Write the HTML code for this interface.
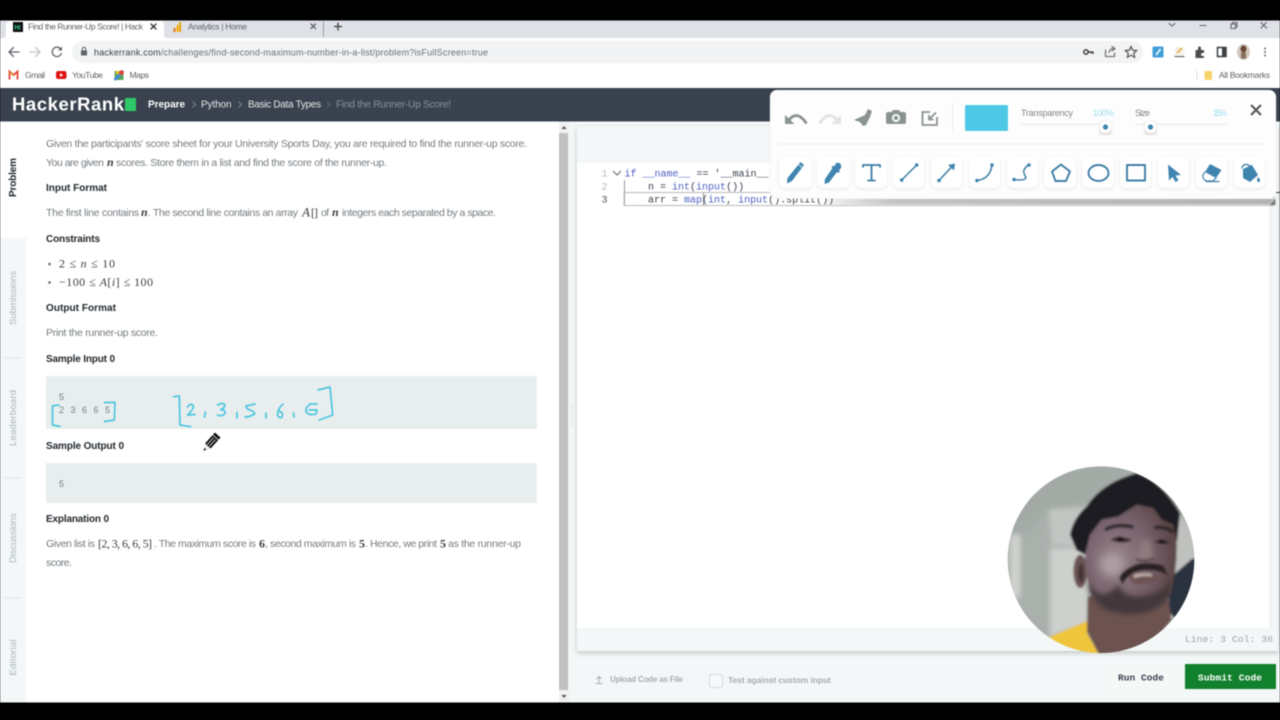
<!DOCTYPE html>
<html lang="en"><head><meta charset="utf-8"><title>Find the Runner-Up Score</title>
<style>
html,body{margin:0;padding:0;background:#000;width:1280px;height:720px;overflow:hidden}
svg{display:block;filter:blur(.4px)}
text{font-family:"Liberation Sans",sans-serif;white-space:pre}
.b{font-size:10.5px;fill:#767c81}
.h{font-size:10px;font-weight:700;fill:#23292e}
.m{font-family:"Liberation Serif",serif;font-size:12px;fill:#3a3f44}
.mi{font-family:"Liberation Serif",serif;font-size:12px;font-style:italic;font-weight:700;fill:#3a3f44}
.c{font-family:"Liberation Mono",monospace;font-size:10px;fill:#39424e}
.t{font-size:8.5px;fill:#5f6368}
.v{font-size:9.5px;fill:#aab4b4}
.p{font-size:9px}
.hand{fill:none;stroke:#4ec5e0;stroke-width:1.7;stroke-linecap:round;stroke-linejoin:round}
.ic{fill:none;stroke:#3f7ea6;stroke-width:1.5;stroke-linecap:round;stroke-linejoin:round}
.if{fill:#3f85b0}
.tb{fill:#fff;filter:drop-shadow(0 1px 1.5px rgba(90,80,110,.14))}
.g{fill:#8a938f}
.ch{fill:none;stroke:#5f6368;stroke-width:1.3;stroke-linecap:round;stroke-linejoin:round}
</style></head><body>
<svg width="1280" height="720" viewBox="0 0 1280 720" xmlns="http://www.w3.org/2000/svg">
<defs>
<clipPath id="cam"><circle cx="288" cy="290" r="280"/></clipPath>
<radialGradient id="skin" cx=".35" cy=".5" r=".7"><stop offset="0" stop-color="#97838a"/><stop offset=".55" stop-color="#75606a"/><stop offset="1" stop-color="#54403f"/></radialGradient>
<linearGradient id="band" x1="0" x2="1" y1="0" y2="0"><stop offset="0" stop-color="#bbb" stop-opacity=".15"/><stop offset=".15" stop-color="#c4c4c4"/><stop offset="1" stop-color="#b4b4b4"/></linearGradient>
<filter id="sf" x="-20%" y="-20%" width="140%" height="140%"><feGaussianBlur stdDeviation="7"/></filter>
<filter id="sg" x="-10%" y="-10%" width="120%" height="120%"><feGaussianBlur stdDeviation="3"/></filter>
<filter id="sl" x="-30%" y="-30%" width="160%" height="160%"><feGaussianBlur stdDeviation="14"/></filter>
<filter id="sh" x="-5%" y="-20%" width="110%" height="140%"><feDropShadow dx="0" dy="2" stdDeviation="2.500" flood-color="#333" flood-opacity=".25"/></filter>
</defs>

<rect width="1280" height="720" fill="#000"/>
<!-- tab strip -->
<rect y="20.500" width="1280" height="18" fill="#dee1e6"/>
<path d="M3 38.500Q6 38 6 34V25Q6 21 10 21H160Q164 21 164 25V34Q164 38 167 38.500Z" fill="#fff"/>
<rect x="13" y="22" width="10" height="10" fill="#0d0f12"/><text x="14.500" y="29.500" style="font-size:6px;font-weight:700" fill="#39d98a">HI</text>
<text class="t" x="28" y="29.500" textLength="115" lengthAdjust="spacing">Find the Runner-Up Score! | Hack</text>
<path class="ch" d="M151 24l5 5M156 24l-5 5" style="stroke:#333"/>
<rect x="173.500" y="28" width="2" height="4" fill="#e8710a"/><rect x="176.500" y="25" width="2" height="7" fill="#f9ab00"/><rect x="179" y="22" width="2" height="10" fill="#e8a30a"/>
<text class="t" x="188" y="29.500" textLength="59" lengthAdjust="spacing">Analytics | Home</text>
<path class="ch" d="M311 24l4.500 4.500M315.500 24l-4.500 4.500"/>
<path d="M323.500 21v16" stroke="#9aa0a6"/>
<path d="M338 22.500v8M334 26.500h8" stroke="#3c4043" stroke-width="1.300"/>
<path class="ch" d="M1169 23.500l3 2.500 3-2.500M1200 25.500h6M1231 24h4.500v4.500h-4.500zM1232.500 24v-1.500h4.500v4.500h-1.500M1261 22.500l5.500 5.500M1266.500 22.500l-5.500 5.500" style="stroke-width:1.100"/>
<!-- toolbar -->
<rect y="38" width="1280" height="50" fill="#fff"/>
<rect x="72" y="41" width="1071" height="22" rx="11" fill="#f1f3f4"/>
<path class="ch" d="M19 52H9.500M13.500 47.500L9 52l4.500 4.500"/>
<path class="ch" d="M30 52h9.500M35.500 47.500L40 52l-4.500 4.500" style="stroke:#c0c4c8"/>
<path d="M61 49.500A4.700 4.700 0 1 0 61.500 53" fill="none" stroke="#5f6368" stroke-width="1.300"/><path d="M62 46.500v4h-4z" fill="#5f6368"/>
<rect x="81" y="50.500" width="6" height="5" fill="#5f6368"/><path d="M82.300 50.500v-1.500a1.700 1.700 0 0 1 3.400 0v1.500" fill="none" stroke="#5f6368"/>
<text x="94" y="55.300" style="font-size:9px" fill="#3c4043" textLength="394" lengthAdjust="spacing"><tspan>hackerrank.com</tspan><tspan fill="#6a6e72">/challenges/find-second-maximum-number-in-a-list/problem?isFullScreen=true</tspan></text>
<!-- right toolbar -->
<circle cx="1086" cy="52" r="2.200" fill="none" stroke="#333" stroke-width="1.400"/><path d="M1088 52h5v2M1091 52v1.500" fill="none" stroke="#333" stroke-width="1.200"/>
<path class="ch" d="M1105.500 50v6.500h9V53M1109 52.500c.5-3 2.500-4 5-4M1112 46.500l3 2.200-3 2.200" style="stroke:#777"/>
<path d="M1131 46.500l1.700 3.700 4 .4-3 2.700.9 4-3.600-2.100-3.600 2.100.9-4-3-2.700 4-.4z" fill="none" stroke="#444" stroke-width="1.100"/>
<rect x="1152.500" y="46.500" width="11" height="11" rx="1.500" fill="#3f9fd6"/><path d="M1156 55l4.500-6" stroke="#fff" stroke-width="1.600"/>
<path d="M1174.500 56.500h10" stroke="#666" stroke-width="1.200"/><rect x="1175" y="47" width="9" height="7.500" fill="#f4f1e6"/><path d="M1177 53l5-5" stroke="#e8a33a" stroke-width="1.500"/>
<path d="M1195.500 50h2.500v-2a1.500 1.500 0 0 1 3 0v2h3v3h-1.500a1.500 1.500 0 0 0 0 3h1.500v2h-8.500z" fill="#4a4d50"/>
<rect x="1217.500" y="47.500" width="8.500" height="9" fill="none" stroke="#3c4043" stroke-width="1.500"/><rect x="1222" y="47.500" width="4.500" height="9" fill="#3c4043"/>
<ellipse cx="1243.500" cy="52" rx="6.500" ry="8" fill="#d2c9bf"/><ellipse cx="1243.500" cy="49" rx="3" ry="3.500" fill="#6b4a38"/><rect x="1241" y="52.500" width="5" height="6" fill="#8a6f5d"/>
<circle cx="1265" cy="48.500" r="1" fill="#5f6368"/><circle cx="1265" cy="52" r="1" fill="#5f6368"/><circle cx="1265" cy="55.500" r="1" fill="#5f6368"/>
<!-- bookmarks -->
<path d="M9.500 79.500v-8l4 3.500 4-3.500v8" fill="none" stroke="#ea4335" stroke-width="1.800"/><path d="M9.500 72l4 3.500" stroke="#d6a020" stroke-width="1.200"/>
<text class="t" x="25" y="78" textLength="20" lengthAdjust="spacing">Gmail</text>
<rect x="56" y="71" width="10.500" height="8" rx="2.200" fill="#e01212"/><path d="M60 73v4l3.200-2z" fill="#fff"/>
<text class="t" x="72" y="78" textLength="31" lengthAdjust="spacing">YouTube</text>
<path d="M114.500 71h9v9h-9z" fill="#58a55c"/><path d="M114.500 80l9-9" stroke="#4a86e8" stroke-width="2.500"/><circle cx="121.500" cy="72.500" r="2.300" fill="#e94235"/><path d="M116 71h3v3h-3z" fill="#f5c518"/>
<text class="t" x="129.500" y="78" textLength="19.500" lengthAdjust="spacing">Maps</text>
<path d="M1197 70.500v10" stroke="#dadce0"/>
<rect x="1204.500" y="71" width="7.500" height="9" rx="1" fill="#f8d56b"/>
<text class="t" x="1219" y="78" textLength="51" lengthAdjust="spacing">All Bookmarks</text>

<!-- HR header -->
<rect y="88" width="1280" height="33.500" fill="#39424e"/>
<text x="12" y="110.500" style="font-size:18.500px;font-weight:700" fill="#fff" textLength="112" lengthAdjust="spacing">HackerRank</text>
<rect x="125" y="98" width="11" height="13" fill="#2ec866"/>
<text x="148" y="107.500" style="font-size:10px;font-weight:700" fill="#fff" textLength="37" lengthAdjust="spacing">Prepare</text>
<path d="M192.500 101.500l3 3-3 3M238.500 101.500l3 3-3 3" fill="none" stroke="#7b848e"/>
<text x="201" y="107.500" style="font-size:10px" fill="#e5e8ea" textLength="30.500" lengthAdjust="spacing">Python</text>
<text x="248" y="107.500" style="font-size:10px" fill="#e5e8ea" textLength="73" lengthAdjust="spacing">Basic Data Types</text>
<path d="M327 101.500l3 3-3 3" fill="none" stroke="#5f6873"/>
<text x="336" y="107.500" style="font-size:10px" fill="#8b939b" textLength="115" lengthAdjust="spacing">Find the Runner-Up Score!</text>

<!-- left pane -->
<rect y="121.500" width="560" height="581" fill="#fff"/>
<rect y="238" width="26" height="464.500" fill="#f3f7f7"/>
<path d="M4 358h17M4 478h17M4 598h17" stroke="#dfe5e5"/>
<g text-anchor="middle">
<text transform="translate(16,177.500) rotate(-90)" style="font-size:10px;font-weight:700" fill="#23292e" textLength="39" lengthAdjust="spacing">Problem</text>
<text class="v" transform="translate(16,298) rotate(-90)" textLength="54" lengthAdjust="spacing">Submissions</text>
<text class="v" transform="translate(16,418) rotate(-90)" textLength="56" lengthAdjust="spacing">Leaderboard</text>
<text class="v" transform="translate(16,538) rotate(-90)" textLength="50" lengthAdjust="spacing">Discussions</text>
<text class="v" transform="translate(16,657.500) rotate(-90)" textLength="36" lengthAdjust="spacing">Editorial</text>
</g>

<text class="b" x="46" y="147" textLength="481" lengthAdjust="spacing">Given the participants' score sheet for your University Sports Day, you are required to find the runner-up score.</text>
<text class="b" x="46" y="166" textLength="58" lengthAdjust="spacing">You are given</text><text class="mi" x="107" y="166">n</text>
<text class="b" x="116" y="166" textLength="271" lengthAdjust="spacing">scores. Store them in a list and find the score of the runner-up.</text>
<text class="h" x="46" y="191" textLength="61" lengthAdjust="spacing">Input Format</text>
<text class="b" x="46" y="216" textLength="93" lengthAdjust="spacing">The first line contains</text><text class="mi" x="141" y="216">n</text>
<text class="b" x="148" y="216" textLength="150" lengthAdjust="spacing">. The second line contains an array</text>
<text x="302" y="216.500" style="font-family:'Liberation Serif',serif;font-size:13px;font-style:italic" fill="#3a3f44">A</text><text x="311" y="216.500" style="font-family:'Liberation Serif',serif;font-size:12px" fill="#3a3f44" textLength="7" lengthAdjust="spacing">[ ]</text>
<text class="b" x="321" y="216" textLength="8" lengthAdjust="spacing">of</text><text class="mi" x="332" y="216">n</text>
<text class="b" x="342" y="216" textLength="154" lengthAdjust="spacing">integers each separated by a space.</text>
<text class="h" x="46" y="242" textLength="54" lengthAdjust="spacing">Constraints</text>
<circle cx="49.500" cy="264" r="1.300" fill="#666"/><circle cx="49.500" cy="282.500" r="1.300" fill="#666"/>
<text class="m" x="59" y="267.500" textLength="56" lengthAdjust="spacing">2 ≤ <tspan font-style="italic">n</tspan> ≤ 10</text>
<text class="m" x="59" y="286" textLength="94" lengthAdjust="spacing">−100 ≤ <tspan font-style="italic">A</tspan>[<tspan font-style="italic">i</tspan>] ≤ 100</text>
<text class="h" x="46" y="311" textLength="70" lengthAdjust="spacing">Output Format</text>
<text class="b" x="46" y="336" textLength="112" lengthAdjust="spacing">Print the runner-up score.</text>
<text class="h" x="46" y="362" textLength="69" lengthAdjust="spacing">Sample Input 0</text>
<rect x="46" y="376" width="491" height="53" fill="#e8eeee"/>
<text class="b" style="font-size:9px" x="59" y="400">5</text>
<text class="b" style="font-size:9px" x="59" y="413" textLength="51" lengthAdjust="spacing">2  3  6  6  5</text>
<text class="h" x="46" y="449" textLength="78" lengthAdjust="spacing">Sample Output 0</text>
<rect x="46" y="463" width="491" height="40" fill="#e8eeee"/>
<text class="b" style="font-size:9px" x="59" y="487">5</text>
<text class="h" x="46" y="522" textLength="63" lengthAdjust="spacing">Explanation 0</text>
<text class="b" x="46" y="547" textLength="49" lengthAdjust="spacing">Given list is</text>
<text class="m" x="98" y="547.500" textLength="54" lengthAdjust="spacing">[2, 3, 6, 6, 5]</text>
<text class="b" x="154" y="547" textLength="102" lengthAdjust="spacing">. The maximum score is</text>
<text class="m" style="font-weight:700" x="259" y="547.500">6</text>
<text class="b" x="265" y="547" textLength="91" lengthAdjust="spacing">, second maximum is</text>
<text class="m" style="font-weight:700" x="359" y="547.500">5</text>
<text class="b" x="365" y="547" textLength="72" lengthAdjust="spacing">. Hence, we print</text>
<text class="m" style="font-weight:700" x="440" y="547.500">5</text>
<text class="b" x="448" y="547" textLength="73" lengthAdjust="spacing">as the runner-up</text>
<text class="b" x="46" y="566" textLength="26" lengthAdjust="spacing">score.</text>

<!-- handwriting -->
<path class="hand" d="M59 405L52.500 406L52.500 425L60 426.500M104.500 402.500L115 402.300L114.300 420L104.500 421.500"/>
<path class="hand" d="M173.500 396.700L179.300 396L180 425L190.700 426.700"/>
<path class="hand" d="M187.500 407Q190 403.500 193 405Q195 408 187.500 415L195 414.500"/>
<path class="hand" d="M205.500 412L204.500 417"/>
<path class="hand" d="M217.500 405Q223 402 225 405Q224 409 220.500 409.500Q226 410 225 413.500Q222 417 217.500 415"/>
<path class="hand" d="M237 412.500L237 418"/>
<path class="hand" d="M255 404L246 406Q246 409 250 410Q255 412 254.500 414Q250 417 245 417"/>
<path class="hand" d="M266 413L266 418"/>
<path class="hand" d="M283 404Q278 408 277.500 415Q279 419 282 417Q284 412 278 411"/>
<path class="hand" d="M293.500 413L294 417"/>
<path class="hand" d="M317 404L310 404Q305 408 306 412Q310 416 316 414L317 410L309 410"/>
<path class="hand" d="M318 390L330 387L332.700 415L319.300 420"/>

<!-- scrollbar -->
<rect x="559" y="121.500" width="10" height="581" fill="#f1f1f1"/>
<rect x="559" y="133" width="9" height="557" fill="#c1c1c1"/>
<path d="M561.500 129l2.500-3 2.500 3zM561.500 695l2.500 3 2.500-3z" fill="#555"/>
<rect x="569" y="121.500" width="711" height="581" fill="#f3f7f7"/>
<path d="M572 404v22" stroke="#dde3e3" stroke-width="2" stroke-dasharray="1 1"/>

<!-- editor -->
<rect x="577" y="126" width="701" height="525" fill="#f3f7f7" filter="url(#sh)"/>
<rect x="577" y="163" width="693" height="465" fill="#fff"/>
<path d="M1270.500 163v465" stroke="#e3e7e7"/>
<text x="601.500" y="176.500" class="c" style="fill:#b5babd">1</text>
<text x="601.500" y="189.500" class="c" style="fill:#b5babd">2</text>
<text x="601.500" y="202.500" class="c" style="fill:#555">3</text>
<path d="M613 171l4 4 4-4" fill="none" stroke="#666"/>
<path d="M624.500 180v25" stroke="#999"/>
<rect x="624" y="192.500" width="650" height="13" fill="none" stroke="#bbb"/>
<text class="c" x="624.500" y="176.500"><tspan fill="#4a5fc0">if</tspan> <tspan fill="#4a5fc0">__name__</tspan> == '__main__':</text>
<text class="c" x="648" y="189.500">n = <tspan fill="#4a5fc0">int</tspan>(<tspan fill="#4a5fc0">input</tspan>())</text>
<path d="M703.500 193v12" stroke="#888"/>
<text x="1185" y="642" style="font-family:'Liberation Mono',monospace;font-size:9.500px" fill="#9aa3a3" textLength="88" lengthAdjust="spacing">Line: 3 Col: 36</text>

<!-- bottom bar -->
<path d="M599 676.500v7M596.500 679l2.500-2.500 2.500 2.500M595.500 683.500h7" fill="none" stroke="#a9b1b1"/>
<text x="610" y="682" style="font-size:8px;font-weight:700" fill="#a6aeae" textLength="73" lengthAdjust="spacing">Upload Code as File</text>
<rect x="709.500" y="674.500" width="13" height="13" rx="2" fill="#f6f9f9" stroke="#d5dbdb"/>
<text x="728" y="683" style="font-size:8.500px;font-weight:700" fill="#a6aeae" textLength="103" lengthAdjust="spacing">Test against custom input</text>
<rect x="1105" y="664" width="73" height="25" fill="#f6f8f8"/>
<text x="1118" y="680.500" style="font-family:'Liberation Mono',monospace;font-size:9.500px;font-weight:700" fill="#39424e" textLength="46" lengthAdjust="spacing">Run Code</text>
<rect x="1185" y="664" width="91" height="25" fill="#12812d"/>
<text x="1198" y="680.500" style="font-family:'Liberation Mono',monospace;font-size:9.500px;font-weight:700" fill="#fff" textLength="64" lengthAdjust="spacing">Submit Code</text>

<!-- webcam -->
<g clip-path="url(#cam)" transform="translate(1005,463) scale(.33333)">
<g filter="url(#sg)">
<rect x="-10" y="-10" width="600" height="600" fill="#aab0ac"/>
<path d="M0 0H400L240 140L130 150L60 210H0Z" fill="#a3aaa6" filter="url(#sl)"/>
<path d="M130 140L260 130L230 250L140 245Z" fill="#c2c6c2" filter="url(#sf)"/>
<path d="M135 255H250V480L135 520Z" fill="#cdd0cd" filter="url(#sf)"/>
<rect x="15" y="215" width="32" height="190" fill="#cfd1ce" filter="url(#sf)"/>
<path d="M500 150L580 200V310L510 340Z" fill="#bfc1be" filter="url(#sf)"/>
<path d="M495 345L560 288L590 280V400L510 470L490 440Z" fill="#29303f"/>
<path d="M480 440L505 462L490 478Z" fill="#d8d8d2"/>
<path d="M132 522L250 473L246 510L285 580H165Z" fill="#efc53a"/>
<path d="M248 400L246 505L285 580L420 570L500 470L490 410Z" fill="#6c5350"/>
<ellipse cx="226" cy="325" rx="21" ry="50" fill="#6b5352"/>
<ellipse cx="228" cy="330" rx="9" ry="28" fill="#453534"/>
<path d="M240 260Q245 150 320 130Q430 100 510 170Q525 290 495 400Q460 455 390 452Q290 450 260 400Q240 340 240 260Z" fill="url(#skin)"/>
<ellipse cx="320" cy="305" rx="36" ry="34" fill="#b0a0a6" filter="url(#sl)"/>
<path d="M244 350Q255 410 300 440Q370 465 430 445Q480 425 496 380L498 340L480 375Q440 400 395 400Q355 400 340 365Q320 390 290 395Q260 385 244 350Z" fill="#42373a" filter="url(#sf)"/>
<path d="M343 345Q350 320 400 302Q440 296 475 308L490 338L465 326Q420 315 385 330Q362 345 352 365Z" fill="#2a2223"/>
<path d="M368 340Q400 328 440 330L465 345Q430 368 385 362Z" fill="#6e5253"/>
<path d="M385 336Q410 328 442 333L440 341Q410 336 388 346Z" fill="#bdb0aa"/>
<path d="M195 215Q205 165 245 130Q290 60 395 30Q470 55 525 150L516 235L505 185L470 170L445 135L395 125L340 160L290 170L255 215L240 275L215 262Z" fill="#1b1a21"/>
<path d="M300 200Q340 180 385 193M448 195Q480 188 505 208" fill="none" stroke="#2f2529" stroke-width="11"/>
<path d="M315 230Q345 212 382 232Q350 246 315 230Z" fill="#3a2c2e"/>
<path d="M448 236Q472 222 497 238Q472 250 448 236Z" fill="#3a2c2e"/>
<ellipse cx="345" cy="228" rx="9" ry="8" fill="#151012"/><ellipse cx="470" cy="236" rx="8" ry="7" fill="#151012"/>
<path d="M412 230Q400 265 392 285Q420 295 445 285Q440 260 435 230Z" fill="#8f7a7e" filter="url(#sf)"/>
<path d="M392 288Q420 300 448 285" fill="none" stroke="#503e3e" stroke-width="6"/>
</g>
</g>

<!-- annotation panel -->
<rect x="825" y="199" width="451" height="5.500" fill="url(#band)"/>
<path d="M1270 205l5-5v5z" fill="#777"/>
<path d="M1276 192.500h4" stroke="#444"/>
<text class="c" x="648" y="202.500">arr = <tspan fill="#4a5fc0">map</tspan>(<tspan fill="#4a5fc0">int</tspan>, <tspan fill="#4a5fc0">input</tspan>().split())</text>
<rect x="770" y="90" width="506" height="108.500" rx="7" fill="#fefdfe"/>
<rect x="770" y="90" width="506" height="108.500" rx="7" fill="none" stroke="#ddd" stroke-opacity=".5" stroke-width=".5"/>
<path d="M952.500 102v31" stroke="#eceef0"/>
<path d="M779 144h487" stroke="#eeeff1" stroke-width="1.200"/>
<!-- undo etc -->
<path d="M788 121Q797 109 806.500 123.500" fill="none" stroke="#8a938f" stroke-width="2.800"/><path d="M785 115v9h9.500z" class="g"/>
<path d="M838 121Q829 109 819.500 123.500" fill="none" stroke="#e0e4e2" stroke-width="2.800"/><path d="M841 115v9h-9.500z" fill="#e0e4e2"/>
<path d="M854 120L865 115L868 109L872 111L870 117L866 125L863 126L860 122Z" class="g"/>
<path d="M888 112h3.500l1.500-2h6l1.500 2h3.500q2 0 2 2v8q0 2-2 2h-16q-2 0-2-2v-8q0-2 2-2z" class="g"/><circle cx="896" cy="118" r="4" fill="#fff"/><circle cx="896" cy="118" r="2.200" class="g"/>
<path d="M930 112H922.500V125H937V117M936 112.500L929 119.500M929 115V119.500H933.500" fill="none" stroke="#8a938f" stroke-width="1.800"/>
<rect x="965" y="105" width="43" height="26" rx="1.500" fill="#4fc8e6"/>
<text class="p" x="1021" y="116" fill="#7f8787" textLength="52" lengthAdjust="spacing">Transparency</text>
<text class="p" x="1093" y="116" fill="#9fdff0" textLength="21" lengthAdjust="spacing">100%</text>
<text class="p" x="1135" y="116" fill="#7f8787" textLength="15" lengthAdjust="spacing">Size</text>
<text class="p" x="1213" y="116" fill="#9fdff0" textLength="14" lengthAdjust="spacing">15%</text>
<path d="M1021 124.500h90M1135 124.500h92" stroke="#eceef0" stroke-width="1.500"/>
<circle cx="1105.500" cy="127" r="6" fill="#fff" filter="url(#sh)"/><circle cx="1105.500" cy="127" r="2.600" fill="#3f85b0"/>
<circle cx="1150.500" cy="127" r="6" fill="#fff" filter="url(#sh)"/><circle cx="1150.500" cy="127" r="2.600" fill="#3f85b0"/>
<path d="M1251 105l10 10M1261 105l-10 10" stroke="#4f5557" stroke-width="2"/>
<!-- tool buttons -->
<g>
<rect class="tb" x="779" y="157" width="33" height="31" rx="6"/><rect class="tb" x="817" y="157" width="33" height="31" rx="6"/><rect class="tb" x="855" y="157" width="32" height="31" rx="6"/><rect class="tb" x="893" y="157" width="31" height="31" rx="6"/><rect class="tb" x="931" y="157" width="31" height="31" rx="6"/><rect class="tb" x="969" y="157" width="31" height="31" rx="6"/><rect class="tb" x="1007" y="157" width="31" height="31" rx="6"/><rect class="tb" x="1044" y="157" width="32" height="31" rx="6"/><rect class="tb" x="1082" y="157" width="32" height="31" rx="6"/><rect class="tb" x="1120" y="157" width="31" height="31" rx="6"/><rect class="tb" x="1158" y="157" width="31" height="31" rx="6"/><rect class="tb" x="1196" y="157" width="31" height="31" rx="6"/><rect class="tb" x="1234" y="157" width="31" height="31" rx="6"/>
</g>
<path class="if" d="M800.500 162L804 165L792 181L787 183.500L787.500 178Z"/><path d="M798.500 164.500l3.500 2.800" stroke="#fff" stroke-width=".8"/>
<path class="if" d="M836 163q4-1 5 2t-2 5l1 1.500-2 1.500-1-1-8 10.500-4.500 1.500.5-5 7.500-11-1-1 2-1.500 1 1z"/>
<path class="ic" d="M863 167v-2h17v2M871.500 165v15.500M868 180.500h7" style="stroke-width:1.800"/>
<path class="ic" d="M901.700 180L916.700 165"/><circle class="if" cx="901.700" cy="180" r="1.800"/><circle class="if" cx="916.700" cy="165" r="1.800"/>
<path class="ic" d="M939 180.500l13-14"/><circle class="if" cx="939" cy="180.500" r="1.800"/><path class="if" d="M955 163.500l-1 7-6-5.500z"/>
<path class="ic" d="M977 180.500Q990 179 992 165"/><circle class="if" cx="977" cy="180.500" r="1.800"/><circle class="if" cx="992" cy="165" r="1.800"/>
<path class="ic" d="M1014 179.500Q1024 181 1026 178Q1023 172 1024 170Q1026 166 1029 165"/><circle class="if" cx="1014" cy="179.500" r="1.800"/><circle class="if" cx="1029" cy="165" r="1.800"/>
<path class="ic" d="M1061 164.500L1070 171.500L1066 181H1055.500L1052 171.500Z" style="stroke-width:1.900"/>
<ellipse class="ic" cx="1098.500" cy="173" rx="10" ry="8" style="stroke-width:1.900"/>
<rect class="ic" x="1127" y="165" width="18" height="15.500" style="stroke-width:1.900"/>
<path class="if" d="M1168 164.500L1181 175L1175.500 175.500L1178.500 180.500L1175.500 182L1172.500 177L1169 180.500Z"/>
<path class="if" d="M1210 164L1221.500 170L1216 178L1205 172Z"/><path class="ic" d="M1205 172L1203 175Q1202 178 1206 181H1213L1216 178M1206 181.500H1219" style="stroke-width:1.200"/>
<path class="if" d="M1243 169L1252 165L1258 175L1250 182L1243 178Z"/><path class="ic" d="M1242 168q1-4 5-3.500l3 1.500" style="stroke-width:1.300"/><path class="if" d="M1258 177q2 2 2 3.500a1.500 1.500 0 0 1-3 0q0-1.500 1-3.500z"/>

<!-- pencil cursor -->
<g transform="translate(211,442.500) rotate(42) scale(1.050)">
<path d="M-4-10h8v14l-4 7-4-7z" fill="#111" stroke="#fff" stroke-width=".8"/>
<path d="M-4-6.500h8M-1.300-5v9M1.300-5v9" stroke="#fff" stroke-width=".7"/>
<path d="M-3.500 4.500h7L0 10.500z" fill="#eee"/><path d="M-1.200 8h2.400L0 10.800z" fill="#111"/>
</g>
<rect y="702.500" width="1280" height="18" fill="#000"/>
<rect y="0" width="1280" height="20.500" fill="#000"/>
</svg>
</body></html>
